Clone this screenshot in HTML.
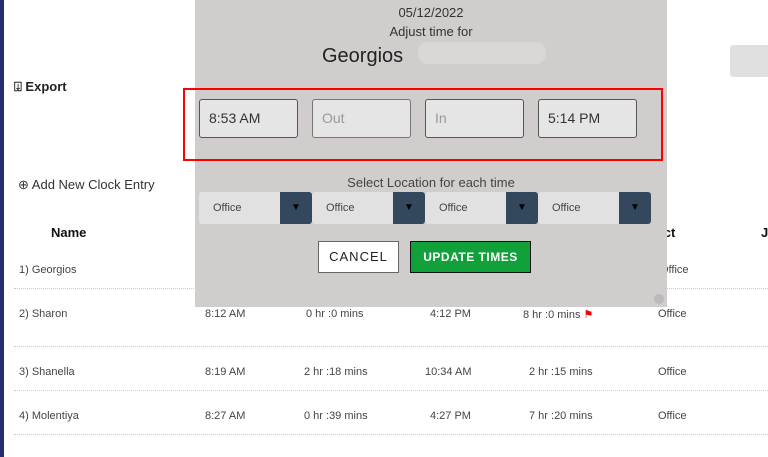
<!DOCTYPE html>
<html style="overflow:hidden;height:457px"><head><style>
body{margin:0;width:768px;height:457px;overflow:hidden;background:#fff;font-family:"Liberation Sans",sans-serif;position:relative;color:#333}
.a{position:absolute}
.bar{left:0;top:0;width:4px;height:457px;background:#2b2d72}
.t{font-size:11px;color:#444;white-space:nowrap}
.sep{left:14px;width:754px;border-top:1px dotted #ccc;height:0}
.modal{left:195px;top:0;width:472px;height:307px;background:#d1cdcc}
.inp{top:99px;width:88px;height:37px;border:1.5px solid #555;border-radius:3px;background:#e5e5e5;font-size:14px;line-height:37px;padding-left:9px}
.sel{top:192px;width:113px;height:32px;background:#e1e1e1;border-radius:3px;font-size:11px;line-height:32px;color:#444}
.sel span{position:absolute;left:14px}
.sel b{position:absolute;right:0;top:0;width:32px;height:32px;background:#33475d;border-radius:0 3px 3px 0;color:#000;font-size:10px;text-align:center;line-height:32px}
</style></head><body>
<div class="a bar"></div>
<div class="a" style="left:14px;top:79px;font-size:13px;font-weight:bold;color:#222">⍗ Export</div>
<div class="a" style="left:18px;top:177px;font-size:13px;color:#333">⊕ Add New Clock Entry</div>
<div class="a" style="left:51px;top:225px;font-size:13px;font-weight:bold;color:#111">Name</div>
<div class="a" style="left:645px;top:225px;font-size:13px;font-weight:bold;color:#111">oject</div>
<div class="a" style="left:761px;top:225px;font-size:13px;font-weight:bold;color:#111">J</div>
<div class="a" style="left:730px;top:45px;width:40px;height:32px;background:#e0e0e0;border-radius:3px"></div>
<div class="a t" style="left:19px;top:264px">1) Georgios</div>
<div class="a t" style="left:660px;top:264px">Office</div>
<div class="a sep" style="top:288px"></div>
<div class="a t" style="left:19px;top:308px">2) Sharon</div>
<div class="a t" style="left:205px;top:308px">8:12 AM</div>
<div class="a t" style="left:306px;top:308px">0 hr :0 mins</div>
<div class="a t" style="left:430px;top:308px">4:12 PM</div>
<div class="a t" style="left:523px;top:308px">8 hr :0 mins <span style="color:#e00">⚑</span></div>
<div class="a t" style="left:658px;top:308px">Office</div>
<div class="a sep" style="top:346px"></div>
<div class="a t" style="left:19px;top:366px">3) Shanella</div>
<div class="a t" style="left:205px;top:366px">8:19 AM</div>
<div class="a t" style="left:304px;top:366px">2 hr :18 mins</div>
<div class="a t" style="left:425px;top:366px">10:34 AM</div>
<div class="a t" style="left:529px;top:366px">2 hr :15 mins</div>
<div class="a t" style="left:658px;top:366px">Office</div>
<div class="a sep" style="top:390px"></div>
<div class="a t" style="left:19px;top:410px">4) Molentiya</div>
<div class="a t" style="left:205px;top:410px">8:27 AM</div>
<div class="a t" style="left:304px;top:410px">0 hr :39 mins</div>
<div class="a t" style="left:430px;top:410px">4:27 PM</div>
<div class="a t" style="left:529px;top:410px">7 hr :20 mins</div>
<div class="a t" style="left:658px;top:410px">Office</div>
<div class="a sep" style="top:434px"></div>

<div class="a modal"></div>
<div class="a" style="left:195px;top:5px;width:472px;text-align:center;font-size:13px;color:#333">05/12/2022</div>
<div class="a" style="left:195px;top:24px;width:472px;text-align:center;font-size:13px;color:#333">Adjust time for</div>
<div class="a" style="left:322px;top:45px;font-size:20px;color:#222">Georgios</div>
<div class="a" style="left:418px;top:42px;width:128px;height:22px;background:#dad7d6;border-radius:10px"></div>
<div class="a" style="left:183px;top:88px;width:476px;height:69px;border:2px solid #f00"></div>
<div class="a inp" style="left:199px;color:#333">8:53 AM</div>
<div class="a inp" style="left:312px;color:#999;border-color:#777">Out</div>
<div class="a inp" style="left:425px;color:#999">In</div>
<div class="a inp" style="left:538px;color:#333">5:14 PM</div>
<div class="a" style="left:195px;top:175px;width:472px;text-align:center;font-size:13px;color:#444">Select Location for each time</div>
<div class="a sel" style="left:199px"><span>Office</span><b>▼</b></div>
<div class="a sel" style="left:312px"><span>Office</span><b>▼</b></div>
<div class="a sel" style="left:425px"><span>Office</span><b>▼</b></div>
<div class="a sel" style="left:538px"><span>Office</span><b>▼</b></div>
<div class="a" style="left:318px;top:241px;width:79px;height:30px;background:#fff;border:1px solid #666;font-size:13px;line-height:30px;text-align:center;letter-spacing:1px;color:#222">CANCEL</div>
<div class="a" style="left:410px;top:241px;width:119px;height:30px;background:#12a03b;border:1.5px solid #111;font-size:12px;font-weight:bold;line-height:30px;text-align:center;color:#fff;letter-spacing:.5px">UPDATE TIMES</div>
<div class="a" style="left:654px;top:294px;width:10px;height:10px;border-radius:50%;background:#bbb"></div>
</body></html>
